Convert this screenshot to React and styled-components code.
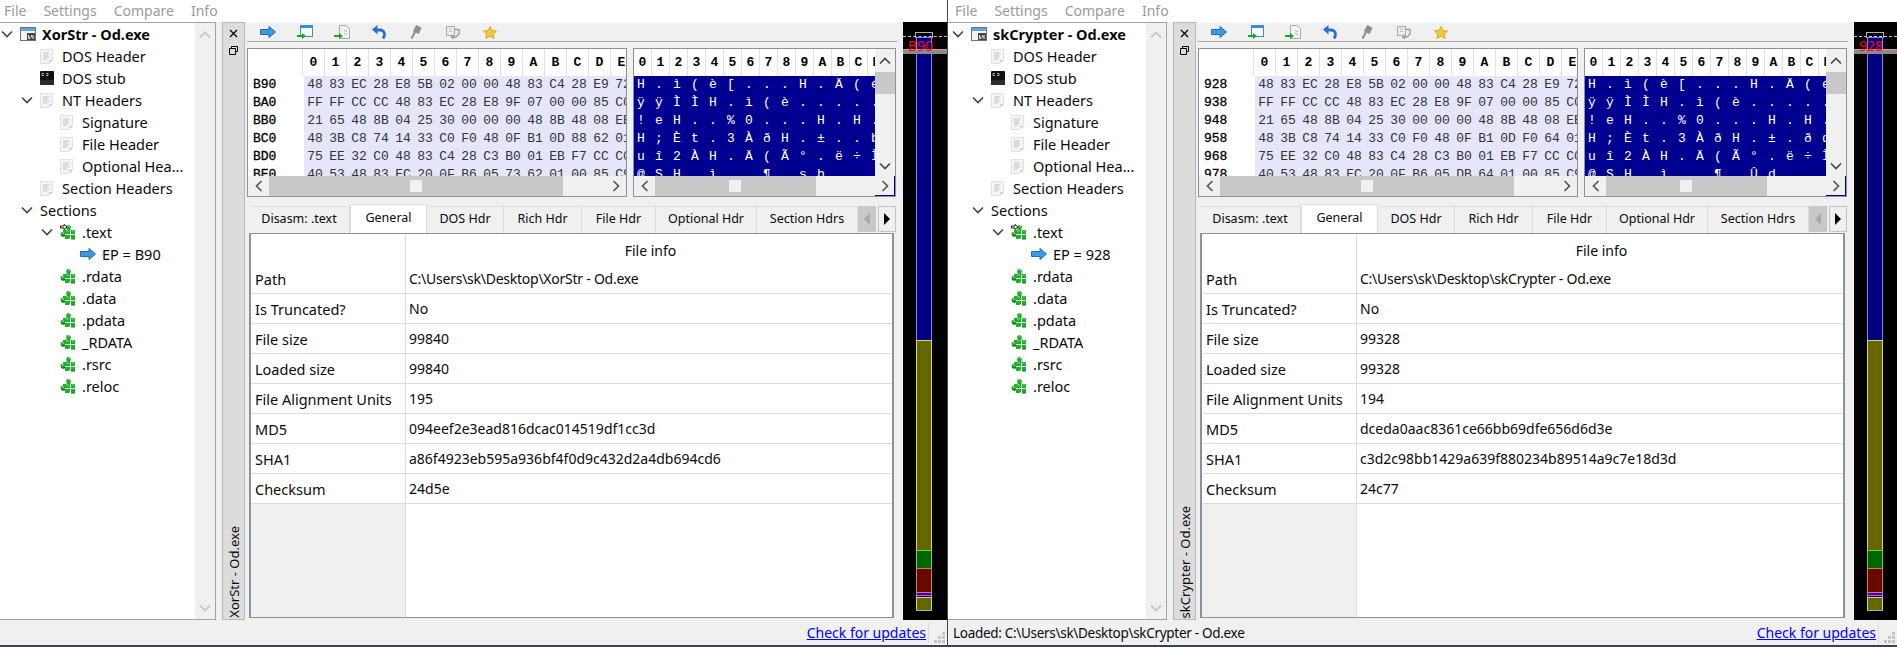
import React from "react";
import styled, { createGlobalStyle } from "styled-components";

const uiFont = `"Noto Sans", "Open Sans", sans-serif`;
const monoFont = `"Liberation Mono", monospace`;

const hexHead = "0123456789ABCDE".split("");
const asciiHead = "0123456789ABCDEF".split("");

const sectionIcons = [".rdata", ".data", ".pdata", "_RDATA", ".rsrc", ".reloc"];

const leftDoc = {
  name: "XorStr - Od.exe",
  ep: "B90",
  labels: ["B90", "BA0", "BB0", "BC0", "BD0", "BE0"],
  hex: [
    "48 83 EC 28 E8 5B 02 00 00 48 83 C4 28 E9 72",
    "FF FF CC CC 48 83 EC 28 E8 9F 07 00 00 85 C0",
    "21 65 48 8B 04 25 30 00 00 00 48 8B 48 08 EB",
    "48 3B C8 74 14 33 C0 F0 48 0F B1 0D 88 62 01",
    "75 EE 32 C0 48 83 C4 28 C3 B0 01 EB F7 CC C0",
    "40 53 48 83 EC 20 0F B6 05 73 62 01 00 85 C9",
  ],
  ascii: [
    "H . ì ( è [ . . . H . Ä ( é",
    "ÿ ÿ Ì Ì H . ì ( è . . . . .",
    "! e H . . % 0 . . . H . H .",
    "H ; È t . 3 À ð H . ± . . b",
    "u î 2 À H . Ä ( Ã ° . ë ÷ Ì",
    "@ S H . ì _ . ¶ . s b . . .",
  ],
  path: "C:\\Users\\sk\\Desktop\\XorStr - Od.exe",
  truncated: "No",
  size: "99840",
  units: "195",
  md5: "094eef2e3ead816dcac014519df1cc3d",
  sha1: "a86f4923eb595a936bf4f0d9c432d2a4db694cd6",
  checksum: "24d5e",
};

const rightDoc = {
  name: "skCrypter - Od.exe",
  ep: "928",
  labels: ["928", "938", "948", "958", "968", "978"],
  hex: [
    "48 83 EC 28 E8 5B 02 00 00 48 83 C4 28 E9 72",
    "FF FF CC CC 48 83 EC 28 E8 9F 07 00 00 85 C0",
    "21 65 48 8B 04 25 30 00 00 00 48 8B 48 08 EB",
    "48 3B C8 74 14 33 C0 F0 48 0F B1 0D F0 64 01",
    "75 EE 32 C0 48 83 C4 28 C3 B0 01 EB F7 CC C0",
    "40 53 48 83 EC 20 0F B6 05 DB 64 01 00 85 C9",
  ],
  ascii: [
    "H . ì ( è [ . . . H . Ä ( é",
    "ÿ ÿ Ì Ì H . ì ( è . . . . .",
    "! e H . . % 0 . . . H . H .",
    "H ; È t . 3 À ð H . ± . ð d",
    "u î 2 À H . Ä ( Ã ° . ë ÷ Ì",
    "@ S H . ì _ . ¶ . Û d . . .",
  ],
  path: "C:\\Users\\sk\\Desktop\\skCrypter - Od.exe",
  truncated: "No",
  size: "99328",
  units: "194",
  md5: "dceda0aac8361ce66bb69dfe656d6d3e",
  sha1: "c3d2c98bb1429a639f880234b89514a9c7e18d3d",
  checksum: "24c77",
};

const tabs = ["Disasm: .text", "General", "DOS Hdr", "Rich Hdr", "File Hdr", "Optional Hdr", "Section Hdrs"];
const tabWidths = [101, 77, 77, 78, 74, 101, 101];

const segments = [
  { h: 303, fill: "#000080", line: "#8080ff" },
  { h: 210, fill: "#666600", line: "#d8d860" },
  { h: 18, fill: "#006600", line: "#60d060" },
  { h: 24, fill: "#660a00", line: "#e07070" },
  { h: 3, fill: "#660066", line: "#c070e0" },
  { h: 2, fill: "#000080", line: "#8080ff" },
  { h: 13, fill: "#666600", line: "#d8d860" },
];

export default function App() {
  return (
    <>
      <GlobalStyle />
      <Desktop>
        <DocWindow doc={leftDoc} width={947} />
        <Divider />
        <DocWindow doc={rightDoc} width={949} $inset status={`Loaded: ${rightDoc.path}`} />
      </Desktop>
    </>
  );
}

function DocWindow({ doc, width, $inset, status }) {
  return (
    <WindowBox style={{ width }}>
      <MenuBar $inset={$inset}>
        <MenuItem>File</MenuItem>
        <MenuItem>Settings</MenuItem>
        <MenuItem>Compare</MenuItem>
        <MenuItem>Info</MenuItem>
      </MenuBar>
      <WindowBody>
        <Tree doc={doc} inset={$inset} />
        <DockStrip>
          <DockButtons>
            <CloseIcon />
            <RestoreIcon />
          </DockButtons>
          <DockTitle>{doc.name}</DockTitle>
        </DockStrip>
        <MainColumn>
          <Toolbar>
            <ToolIcon><BlueArrow /></ToolIcon>
            <ToolIcon><WindowArrow /></ToolIcon>
            <ToolIcon><DocArrow /></ToolIcon>
            <ToolIcon><UndoIcon /></ToolIcon>
            <ToolIcon><PinIcon /></ToolIcon>
            <ToolIcon><CopyIcon /></ToolIcon>
            <ToolIcon><StarIcon /></ToolIcon>
          </Toolbar>
          <HexRow>
            <HexPanel $w={380}>
              <HexArea>
                <HexHeader>
                  <RowGutter />
                  {hexHead.map((c) => (
                    <HeadCell key={c} $w={22}>{c}</HeadCell>
                  ))}
                </HexHeader>
                <HexRows>
                  {doc.hex.map((line, i) => (
                    <HexLine key={doc.labels[i]}>
                      <RowLabel>{doc.labels[i]}</RowLabel>
                      <HexBytes>
                        {line.split(" ").map((b, j) => (
                          <ByteCell key={j} $w={22}>{b}</ByteCell>
                        ))}
                      </HexBytes>
                    </HexLine>
                  ))}
                </HexRows>
              </HexArea>
              <HScroll>
                <ScrollArrow><ChevronLeft /></ScrollArrow>
                <ScrollTrack $w={294}>
                  <ThumbMark $x={141} />
                </ScrollTrack>
                <ScrollGap />
                <ScrollArrow><ChevronRight /></ScrollArrow>
              </HScroll>
            </HexPanel>
            <HexPanel $w={263}>
              <AsciiTop>
                <AsciiArea>
                  <HexHeader>
                    {asciiHead.map((c) => (
                      <HeadCell key={c} $w={18}>{c}</HeadCell>
                    ))}
                  </HexHeader>
                  <HexRows>
                    {doc.ascii.map((line, i) => (
                      <AsciiLine key={i}>
                        {line.split(" ").map((b, j) => (
                          <AsciiCell key={j}>{b === "_" ? " " : b}</AsciiCell>
                        ))}
                      </AsciiLine>
                    ))}
                  </HexRows>
                </AsciiArea>
                <VScroll>
                  <ChevronUp />
                  <VThumb />
                  <VSpacer />
                  <ChevronDown />
                </VScroll>
              </AsciiTop>
              <HScroll>
                <ScrollArrow><ChevronLeft /></ScrollArrow>
                <ScrollTrack $w={161}>
                  <ThumbMark $x={74} />
                </ScrollTrack>
                <ScrollGap />
                <ScrollArrow><ChevronRight /></ScrollArrow>
                <FocusCorner />
              </HScroll>
            </HexPanel>
          </HexRow>
          <TabBar>
            {tabs.map((t, i) => (
              <Tab key={t} $active={t === "General"} style={{ width: tabWidths[i] }}>{t}</Tab>
            ))}
            <TabScrollLeft><TriLeft /></TabScrollLeft>
            <TabScrollRight><TriRight /></TabScrollRight>
          </TabBar>
          <InfoBox>
            <InfoGrid>
              <LabelCell $head />
              <ValueCell $head><HeadTitle>File info</HeadTitle></ValueCell>
              <InfoRow label="Path" value={doc.path} tight />
              <InfoRow label="Is Truncated?" value={doc.truncated} />
              <InfoRow label="File size" value={doc.size} />
              <InfoRow label="Loaded size" value={doc.size} />
              <InfoRow label="File Alignment Units" value={doc.units} />
              <InfoRow label="MD5" value={doc.md5} />
              <InfoRow label="SHA1" value={doc.sha1} />
              <InfoRow label="Checksum" value={doc.checksum} />
            </InfoGrid>
            <InfoFill>
              <FillLabel />
              <FillValue />
            </InfoFill>
          </InfoBox>
        </MainColumn>
        <Overview label={doc.ep} />
      </WindowBody>
      <StatusBar>
        <StatusText>{status}</StatusText>
        <UpdateLink href="#">Check for updates</UpdateLink>
        <StatusSep />
        <GripSlot><GripIcon /></GripSlot>
      </StatusBar>
      <TaskEdge />
    </WindowBox>
  );
}

function InfoRow({ label, value, tight }) {
  return (
    <>
      <LabelCell>{label}</LabelCell>
      <ValueCell $tight={tight}>{value}</ValueCell>
    </>
  );
}

function Tree({ doc, inset }) {
  return (
    <TreePanel $inset={inset}>
      <TreeList>
        <TreeRow $depth={0}><Expander><ChevronDown /></Expander><IconSlot><AppIcon /></IconSlot><BoldName>{doc.name}</BoldName></TreeRow>
        <TreeRow $depth={1}><Expander /><IconSlot><PageIcon /></IconSlot>DOS Header</TreeRow>
        <TreeRow $depth={1}><Expander /><IconSlot><ConsoleIcon /></IconSlot>DOS stub</TreeRow>
        <TreeRow $depth={1}><Expander><ChevronDown /></Expander><IconSlot><PageIcon /></IconSlot>NT Headers</TreeRow>
        <TreeRow $depth={2}><Expander /><IconSlot><PageIcon /></IconSlot>Signature</TreeRow>
        <TreeRow $depth={2}><Expander /><IconSlot><PageIcon /></IconSlot>File Header</TreeRow>
        <TreeRow $depth={2}><Expander /><IconSlot><PageIcon /></IconSlot>Optional Hea...</TreeRow>
        <TreeRow $depth={1}><Expander /><IconSlot><PageIcon /></IconSlot>Section Headers</TreeRow>
        <TreeRow $depth={1}><Expander><ChevronDown /></Expander>Sections</TreeRow>
        <TreeRow $depth={2}><Expander><ChevronDown /></Expander><IconSlot><PuzzleIcon marked /></IconSlot>.text</TreeRow>
        <TreeRow $depth={3}><Expander /><IconSlot><BlueArrow /></IconSlot>EP = {doc.ep}</TreeRow>
        {sectionIcons.map((s) => (
          <TreeRow key={s} $depth={2}><Expander /><IconSlot><PuzzleIcon /></IconSlot>{s}</TreeRow>
        ))}
      </TreeList>
      <TreeScroll>
        <FadedChevronUp />
        <VSpacer />
        <FadedChevronDown />
      </TreeScroll>
    </TreePanel>
  );
}

function Overview({ label }) {
  return (
    <OverviewPane>
      <PageBox />
      <DashLine />
      <OverviewBar>
        {segments.map((s, i) => (
          <BarSegment key={i} style={{ height: s.h, background: s.fill, borderColor: s.line }} />
        ))}
      </OverviewBar>
      <PinkLine />
      <GreyBand />
      <OverviewLabel>{label}</OverviewLabel>
    </OverviewPane>
  );
}

/* icons */

function ChevronDown() {
  return (
    <svg width="12" height="8" viewBox="0 0 12 8">
      <path d="M1 1.5 L6 6.5 L11 1.5" fill="none" stroke="#444" strokeWidth="1.6" />
    </svg>
  );
}
function ChevronUp() {
  return (
    <svg width="12" height="8" viewBox="0 0 12 8">
      <path d="M1 6.5 L6 1.5 L11 6.5" fill="none" stroke="#444" strokeWidth="1.6" />
    </svg>
  );
}
function FadedChevronUp() {
  return (
    <svg width="12" height="8" viewBox="0 0 12 8">
      <path d="M1 6.5 L6 1.5 L11 6.5" fill="none" stroke="#c8c8c8" strokeWidth="1.8" />
    </svg>
  );
}
function FadedChevronDown() {
  return (
    <svg width="12" height="8" viewBox="0 0 12 8">
      <path d="M1 1.5 L6 6.5 L11 1.5" fill="none" stroke="#c8c8c8" strokeWidth="1.8" />
    </svg>
  );
}
function ChevronLeft() {
  return (
    <svg width="8" height="12" viewBox="0 0 8 12">
      <path d="M6.5 1 L1.5 6 L6.5 11" fill="none" stroke="#555" strokeWidth="1.7" />
    </svg>
  );
}
function ChevronRight() {
  return (
    <svg width="8" height="12" viewBox="0 0 8 12">
      <path d="M1.5 1 L6.5 6 L1.5 11" fill="none" stroke="#555" strokeWidth="1.7" />
    </svg>
  );
}
function TriLeft() {
  return (
    <svg width="7" height="12" viewBox="0 0 7 12">
      <path d="M6 0 L6 12 L0 6 Z" fill="#a8a8a8" />
    </svg>
  );
}
function TriRight() {
  return (
    <svg width="7" height="12" viewBox="0 0 7 12">
      <path d="M0 0 L0 12 L6 6 Z" fill="#000" />
    </svg>
  );
}
function CloseIcon() {
  return (
    <svg width="9" height="9" viewBox="0 0 9 9">
      <path d="M1 1 L8 8 M8 1 L1 8" stroke="#000" strokeWidth="1.3" />
    </svg>
  );
}
function RestoreIcon() {
  return (
    <svg width="9" height="9" viewBox="0 0 9 9">
      <path d="M2.5 2.5 V0.5 H8.5 V5.5 H6.5 M0.5 2.5 H6.5 V8.5 H0.5 Z" fill="none" stroke="#000" />
    </svg>
  );
}
function BlueArrow() {
  return (
    <svg width="16" height="12" viewBox="0 0 16 12">
      <path d="M0.5 3.5 H9 V0.5 L15.5 6 L9 11.5 V8.5 H0.5 Z" fill="#3d9ae0" stroke="#1d6fb4" />
    </svg>
  );
}
function WindowArrow() {
  return (
    <svg width="16" height="14" viewBox="0 0 16 14">
      <rect x="3.5" y="0.5" width="12" height="11" fill="#f6fbff" stroke="#3b8ed0" />
      <rect x="3.5" y="0.5" width="12" height="2.5" fill="#3b8ed0" />
      <path d="M0 10 H5 V8 L9 11 L5 14 V12 H0 Z" fill="#1fa51f" />
    </svg>
  );
}
function DocArrow() {
  return (
    <svg width="16" height="14" viewBox="0 0 16 14">
      <path d="M5.5 0.5 H12 L15.5 3.5 V13.5 H5.5 Z" fill="#f3f3f3" stroke="#a8a8a8" />
      <path d="M10 5 L13 7 M10 8 L13 10" stroke="#b0b0b0" />
      <path d="M0 10 H5 V8 L9 11 L5 14 V12 H0 Z" fill="#1fa51f" />
    </svg>
  );
}
function UndoIcon() {
  return (
    <svg width="14" height="14" viewBox="0 0 14 14">
      <path d="M3 5 H8 A4.5 4.5 0 0 1 12.5 9 C12.5 10.5 12 12 11 13.5" fill="none" stroke="#2c6fc9" strokeWidth="2.8" />
      <path d="M0 4.5 L5.5 0 V9.5 Z" fill="#2c6fc9" />
    </svg>
  );
}
function PinIcon() {
  return (
    <svg width="12" height="14" viewBox="0 0 12 14">
      <path d="M6.5 0.5 L11 3 L8.5 8.5 L3.5 6 Z" fill="#8e8e8e" stroke="#8e8e8e" />
      <path d="M5 7 L1.5 13.5" stroke="#8e8e8e" strokeWidth="2" />
    </svg>
  );
}
function CopyIcon() {
  return (
    <svg width="14" height="13" viewBox="0 0 14 13">
      <rect x="0.5" y="0.5" width="8" height="9" fill="#ececec" stroke="#ababab" />
      <path d="M9 3.5 H13 V8 L10 11 H6 M8 9 L5.5 11 L8 13" fill="none" stroke="#9c9c9c" strokeWidth="1.4" />
      <path d="M3 3 H6 M3 5.5 H6" stroke="#bdbdbd" />
    </svg>
  );
}
function StarIcon() {
  return (
    <svg width="14" height="13" viewBox="0 0 14 13">
      <path d="M7 0.5 L9 4.5 L13.5 5 L10.2 8 L11.2 12.5 L7 10.2 L2.8 12.5 L3.8 8 L0.5 5 L5 4.5 Z" fill="#f5c842" stroke="#dca91c" />
    </svg>
  );
}
function AppIcon() {
  return (
    <svg width="16" height="14" viewBox="0 0 16 14">
      <rect x="0.5" y="0.5" width="15" height="13" fill="#f4f4f4" stroke="#707070" />
      <rect x="1" y="1" width="14" height="3" fill="#5aa7e0" />
      <rect x="7" y="6" width="8" height="7" fill="#444" />
      <path d="M8.5 8 V11.5 H10 V10 H8.5 M11.5 8 V10 H13.5 M13 8 V12" fill="none" stroke="#fff" strokeWidth="0.8" />
    </svg>
  );
}
function PageIcon() {
  return (
    <svg width="14" height="15" viewBox="0 0 14 15">
      <path d="M0.5 0.5 H12.5 V10 L9 14.5 H0.5 Z" fill="#f4f4f4" stroke="#e0e0e0" />
      <path d="M3 4 H9 M3 6 H8 M3 8 H9 M3 10 H7" stroke="#c4c4c4" />
      <path d="M9 11 H13 L10 14 Z" fill="#cfcfcf" />
    </svg>
  );
}
function ConsoleIcon() {
  return (
    <svg width="14" height="14" viewBox="0 0 14 14">
      <rect width="14" height="14" rx="1" fill="#111" />
      <rect x="0" y="9" width="14" height="5" fill="#2a2a2a" />
      <path d="M2 2.5 H4 M2 4.5 H4 M2 2.5 V4.5 M6 2.5 H8 V4.5 H6" stroke="#ccc" strokeWidth="0.8" fill="none" />
    </svg>
  );
}
function PuzzleIcon({ marked }) {
  return (
    <svg width="16" height="16" viewBox="0 0 16 16">
      <path d="M3 6 H6.5 V4.5 C5.5 3 6.5 1 8.5 1 C10.5 1 11.5 3 10.5 4.5 V6 H15 V15 H11.5 C11.5 13.5 9 13.5 9 15 H5 V12.5 C3 13.5 0.5 12.5 0.5 10 C0.5 8 2 7.5 3 8.5 Z" fill="#24ab30" />
      <path d="M8 2 H10 M6 7 H9 M12 7 H14 M2 9 H4" stroke="#7fe08a" />
      <path d="M10.5 6 V15 M5 10.5 H15" stroke="#e8f8ea" strokeWidth="0.9" />
      <path d="M1 11.5 H5 M11 15 H15" stroke="#127a1c" />
      {marked && (
        <path d="M0.5 2 H4 V0.5 L7 3 L4 5.5 V4 H0.5 Z" fill="#fff" stroke="#000" strokeWidth="0.9" />
      )}
    </svg>
  );
}
function GripIcon() {
  return (
    <svg width="11" height="11" viewBox="0 0 11 11">
      <path d="M8 0 h3 v3 h-3 Z M4 4 h3 v3 h-3 Z M8 4 h3 v3 h-3 Z M0 8 h3 v3 h-3 Z M4 8 h3 v3 h-3 Z M8 8 h3 v3 h-3 Z" fill="#c4c4c4" />
    </svg>
  );
}

/* styles */

const GlobalStyle = createGlobalStyle`
  html, body {
    margin: 0;
    padding: 0;
    background: #fff;
    overflow: hidden;
  }
  * {
    box-sizing: border-box;
  }
`;

const Desktop = styled.div`
  display: flex;
  width: 1897px;
  height: 647px;
  font-family: ${uiFont};
  font-size: 14px;
  color: #0a0a0a;
  overflow: hidden;
`;

const Divider = styled.div`
  width: 1px;
  background: #3a4656;
`;

const WindowBox = styled.div`
  display: flex;
  flex-direction: column;
  height: 647px;
`;

const MenuBar = styled.div`
  display: flex;
  height: 22px;
  align-items: center;
  padding-left: ${(p) => (p.$inset ? 7 : 4)}px;
  gap: 17px;
  background: #fff;
  color: #9a9a9a;
  font-size: 14px;
`;

const MenuItem = styled.span`
  line-height: 18px;
`;

const WindowBody = styled.div`
  display: flex;
  height: 598px;
  background: #f0f0f0;
`;

const TreePanel = styled.div`
  display: flex;
  width: ${(p) => (p.$inset ? 219 : 216)}px;
  flex: none;
  background: #fff;
  border-top: 1px solid #a0a4aa;
  border-right: 1px solid #a0a4aa;
  border-bottom: 1px solid #a0a4aa;
  padding-left: ${(p) => (p.$inset ? 3 : 0)}px;
  font-size: 14.5px;
`;

const TreeList = styled.div`
  flex: 1;
`;

const TreeRow = styled.div`
  display: flex;
  align-items: center;
  height: 22px;
  padding-left: ${(p) => p.$depth * 20}px;
  white-space: nowrap;
`;

const Expander = styled.span`
  display: flex;
  align-items: center;
  padding-left: 1px;
  width: 20px;
  flex: none;
`;

const IconSlot = styled.span`
  display: flex;
  align-items: center;
  width: 22px;
  flex: none;
`;

const BoldName = styled.span`
  font-weight: 700;
`;

const TreeScroll = styled.div`
  display: flex;
  flex-direction: column;
  align-items: center;
  width: 20px;
  padding: 8px 0 7px;
  background: #f0f0f0;
`;

const VSpacer = styled.div`
  flex: 1;
`;

const DockStrip = styled.div`
  display: flex;
  flex-direction: column;
  justify-content: space-between;
  align-items: center;
  width: 23px;
  margin-left: 6px;
  flex: none;
  background: #dcdcdc;
  border: 1px solid #b8b8b8;
`;

const DockButtons = styled.div`
  display: flex;
  flex-direction: column;
  align-items: center;
  gap: 8px;
  padding-top: 6px;
`;

const DockTitle = styled.div`
  writing-mode: vertical-rl;
  transform: rotate(180deg);
  font-size: 13px;
  line-height: 20px;
  white-space: nowrap;
  padding-top: 1px;
`;

const MainColumn = styled.div`
  display: flex;
  flex-direction: column;
  width: 650px;
  margin-left: 2px;
  margin-right: 6px;
  flex: none;
`;

const Toolbar = styled.div`
  display: flex;
  align-items: center;
  height: 20px;
  padding-left: 2px;
  background: #f0f0f0;
  border-top: 1px solid #fafafa;
  border-bottom: 1px solid #a8a8a8;
`;

const ToolIcon = styled.span`
  display: flex;
  justify-content: center;
  align-items: center;
  width: 37px;
`;

const HexRow = styled.div`
  display: flex;
  gap: 6px;
  margin-top: 6px;
`;

const HexPanel = styled.div`
  position: relative;
  display: flex;
  flex-direction: column;
  width: ${(p) => p.$w}px;
  height: 149px;
  border: 1px solid #8c929a;
  background: #fff;
`;

const HexArea = styled.div`
  flex: 1;
  overflow: hidden;
  font-family: ${monoFont};
  font-size: 13px;
`;

const AsciiTop = styled.div`
  display: flex;
  flex: 1;
  min-height: 0;
`;

const AsciiArea = styled(HexArea)`
  background: #fff;
`;

const HexHeader = styled.div`
  display: flex;
  height: 27px;
  align-items: center;
  font-weight: 700;
  color: #000;
`;

const RowGutter = styled.div`
  width: 55px;
  height: 27px;
  flex: none;
  border-right: 1px solid #e0e0e0;
`;

const HeadCell = styled.div`
  flex: none;
  width: ${(p) => p.$w}px;
  height: 27px;
  line-height: 27px;
  text-align: center;
  border-right: 1px solid #e0e0e0;
`;

const HexRows = styled.div`
  display: flex;
  flex-direction: column;
  background: #000090;
  height: 100px;
  overflow: hidden;
`;

const HexLine = styled.div`
  display: flex;
  flex: none;
  height: 18px;
  background: #fff;
`;

const RowLabel = styled.div`
  width: 56px;
  flex: none;
  line-height: 18px;
  padding-left: 5px;
  color: #000;
  -webkit-text-stroke: 0.3px #000;
`;

const HexBytes = styled.div`
  display: flex;
  flex: 1;
  background: #e6e6fa;
`;

const ByteCell = styled.div`
  flex: none;
  width: ${(p) => p.$w}px;
  line-height: 18px;
  text-align: center;
  color: #333;
`;

const AsciiLine = styled.div`
  display: flex;
  flex: none;
  height: 18px;
  color: #fff;
`;

const AsciiCell = styled.div`
  flex: none;
  width: 18px;
  line-height: 18px;
  text-align: center;
  position: relative;
  left: -2px;
`;

const HScroll = styled.div`
  position: relative;
  display: flex;
  flex: none;
  align-items: stretch;
  height: 20px;
  background: #f0f0f0;
`;

const ScrollArrow = styled.div`
  display: flex;
  align-items: center;
  justify-content: center;
  flex: none;
  width: 21px;
`;

const ScrollTrack = styled.div`
  position: relative;
  flex: none;
  width: ${(p) => p.$w}px;
  background: #c8c8c8;
`;

const ThumbMark = styled.div`
  position: absolute;
  top: 4px;
  left: ${(p) => p.$x}px;
  width: 12px;
  height: 12px;
  background: #f0f0f0;
`;

const ScrollGap = styled.div`
  flex: 1;
`;

const FocusCorner = styled.div`
  position: absolute;
  right: 0;
  bottom: 0;
  width: 20px;
  height: 20px;
  border-right: 1px solid #000090;
  border-bottom: 1px solid #000090;
`;

const VScroll = styled.div`
  display: flex;
  flex: none;
  flex-direction: column;
  align-items: center;
  width: 20px;
  padding: 8px 0 6px;
  background: #f0f0f0;
`;

const VThumb = styled.div`
  align-self: stretch;
  height: 22px;
  margin-top: 7px;
  background: #c8c8c8;
`;

const TabBar = styled.div`
  display: flex;
  align-items: flex-end;
  height: 36px;
  padding-left: 2px;
`;

const Tab = styled.div`
  flex: none;
  display: flex;
  align-items: center;
  justify-content: center;
  height: ${(p) => (p.$active ? 29 : 27)}px;
  font-size: 12.5px;
  white-space: nowrap;
  background: ${(p) => (p.$active ? "#fff" : "#f0f0f0")};
  border: 1px solid #dcdcdc;
  border-left: ${(p) => (p.$active ? "1px solid #dcdcdc" : "none")};
  border-bottom: none;
  padding-bottom: 3px;
`;

const TabScrollLeft = styled.div`
  display: flex;
  align-items: center;
  justify-content: center;
  width: 18px;
  height: 26px;
  margin-bottom: 1px;
  background: #c8c8c8;
`;

const TabScrollRight = styled.div`
  display: flex;
  align-items: center;
  justify-content: center;
  width: 18px;
  height: 26px;
  margin-left: 2px;
  margin-bottom: 1px;
  background: #f0f0f0;
  border: 1px solid #c4c4c4;
`;

const InfoBox = styled.div`
  display: flex;
  flex-direction: column;
  width: 645px;
  height: 385px;
  margin-left: 2px;
  background: #fff;
  border: 1px solid #8c929a;
  border-left-width: 2px;
  border-right-width: 2px;
`;

const InfoGrid = styled.div`
  display: grid;
  grid-template-columns: 155px 1fr;
  flex: none;
`;

const LabelCell = styled.div`
  height: 30px;
  line-height: 30px;
  padding-left: 4px;
  font-size: 14.5px;
  white-space: nowrap;
  border-bottom: ${(p) => (p.$head ? "none" : "1px solid #dcdcdc")};
  border-right: 1px solid #dcdcdc;
`;

const ValueCell = styled.div`
  height: 30px;
  line-height: 29px;
  padding-left: 3px;
  letter-spacing: ${(p) => (p.$tight ? "-0.25px" : "0")};
  white-space: nowrap;
  border-bottom: ${(p) => (p.$head ? "none" : "1px solid #dcdcdc")};
`;

const HeadTitle = styled.div`
  padding-top: 2px;
  text-align: center;
`;

const InfoFill = styled.div`
  display: flex;
  flex: 1;
`;

const FillLabel = styled.div`
  width: 155px;
  background: #f0f0f0;
  border-right: 1px solid #dcdcdc;
`;

const FillValue = styled.div`
  flex: 1;
`;

const OverviewPane = styled.div`
  position: relative;
  flex: 1;
  padding: 15px 0 0 13px;
  background: #000;
`;

const OverviewBar = styled.div`
  display: flex;
  flex-direction: column;
  width: 16px;
  border-bottom: 1px solid #b0b0b0;
`;

const BarSegment = styled.div`
  flex: none;
  border-left: 1px solid;
  border-right: 1px solid;
  border-top: 1px solid;
`;

const PageBox = styled.div`
  position: absolute;
  top: 10px;
  left: 12px;
  width: 18px;
  height: 6px;
  border: 1px solid #b0b0b0;
  border-bottom: none;
`;

const DashLine = styled.div`
  position: absolute;
  top: 14px;
  left: 0;
  right: 0;
  border-top: 1px dashed #c8c8c8;
`;

const PinkLine = styled.div`
  position: absolute;
  top: 27px;
  left: 0;
  right: 0;
  height: 1px;
  background: #e89090;
`;

const GreyBand = styled.div`
  position: absolute;
  top: 28px;
  left: 0;
  right: 0;
  height: 4px;
  background: #8a8a8a;
`;

const OverviewLabel = styled.div`
  position: absolute;
  top: 15px;
  left: 5px;
  font-size: 14px;
  line-height: 18px;
  color: #ff0000;
`;

const StatusBar = styled.div`
  display: flex;
  align-items: center;
  height: 25px;
  background: #f0f0f0;
  position: relative;
`;

const StatusText = styled.span`
  flex: 1;
  padding-left: 5px;
  font-size: 13.5px;
  letter-spacing: -0.3px;
  white-space: nowrap;
`;

const UpdateLink = styled.a`
  color: #0000ff;
  text-decoration: underline;
  white-space: nowrap;
`;

const StatusSep = styled.div`
  width: 1px;
  height: 20px;
  margin-left: 2px;
  background: #dcdcdc;
`;

const GripSlot = styled.div`
  display: flex;
  align-self: flex-end;
  justify-content: flex-end;
  width: 18px;
  padding: 0 2px 2px 0;
`;

const TaskEdge = styled.div`
  height: 2px;
  background: #33455a;
`;
